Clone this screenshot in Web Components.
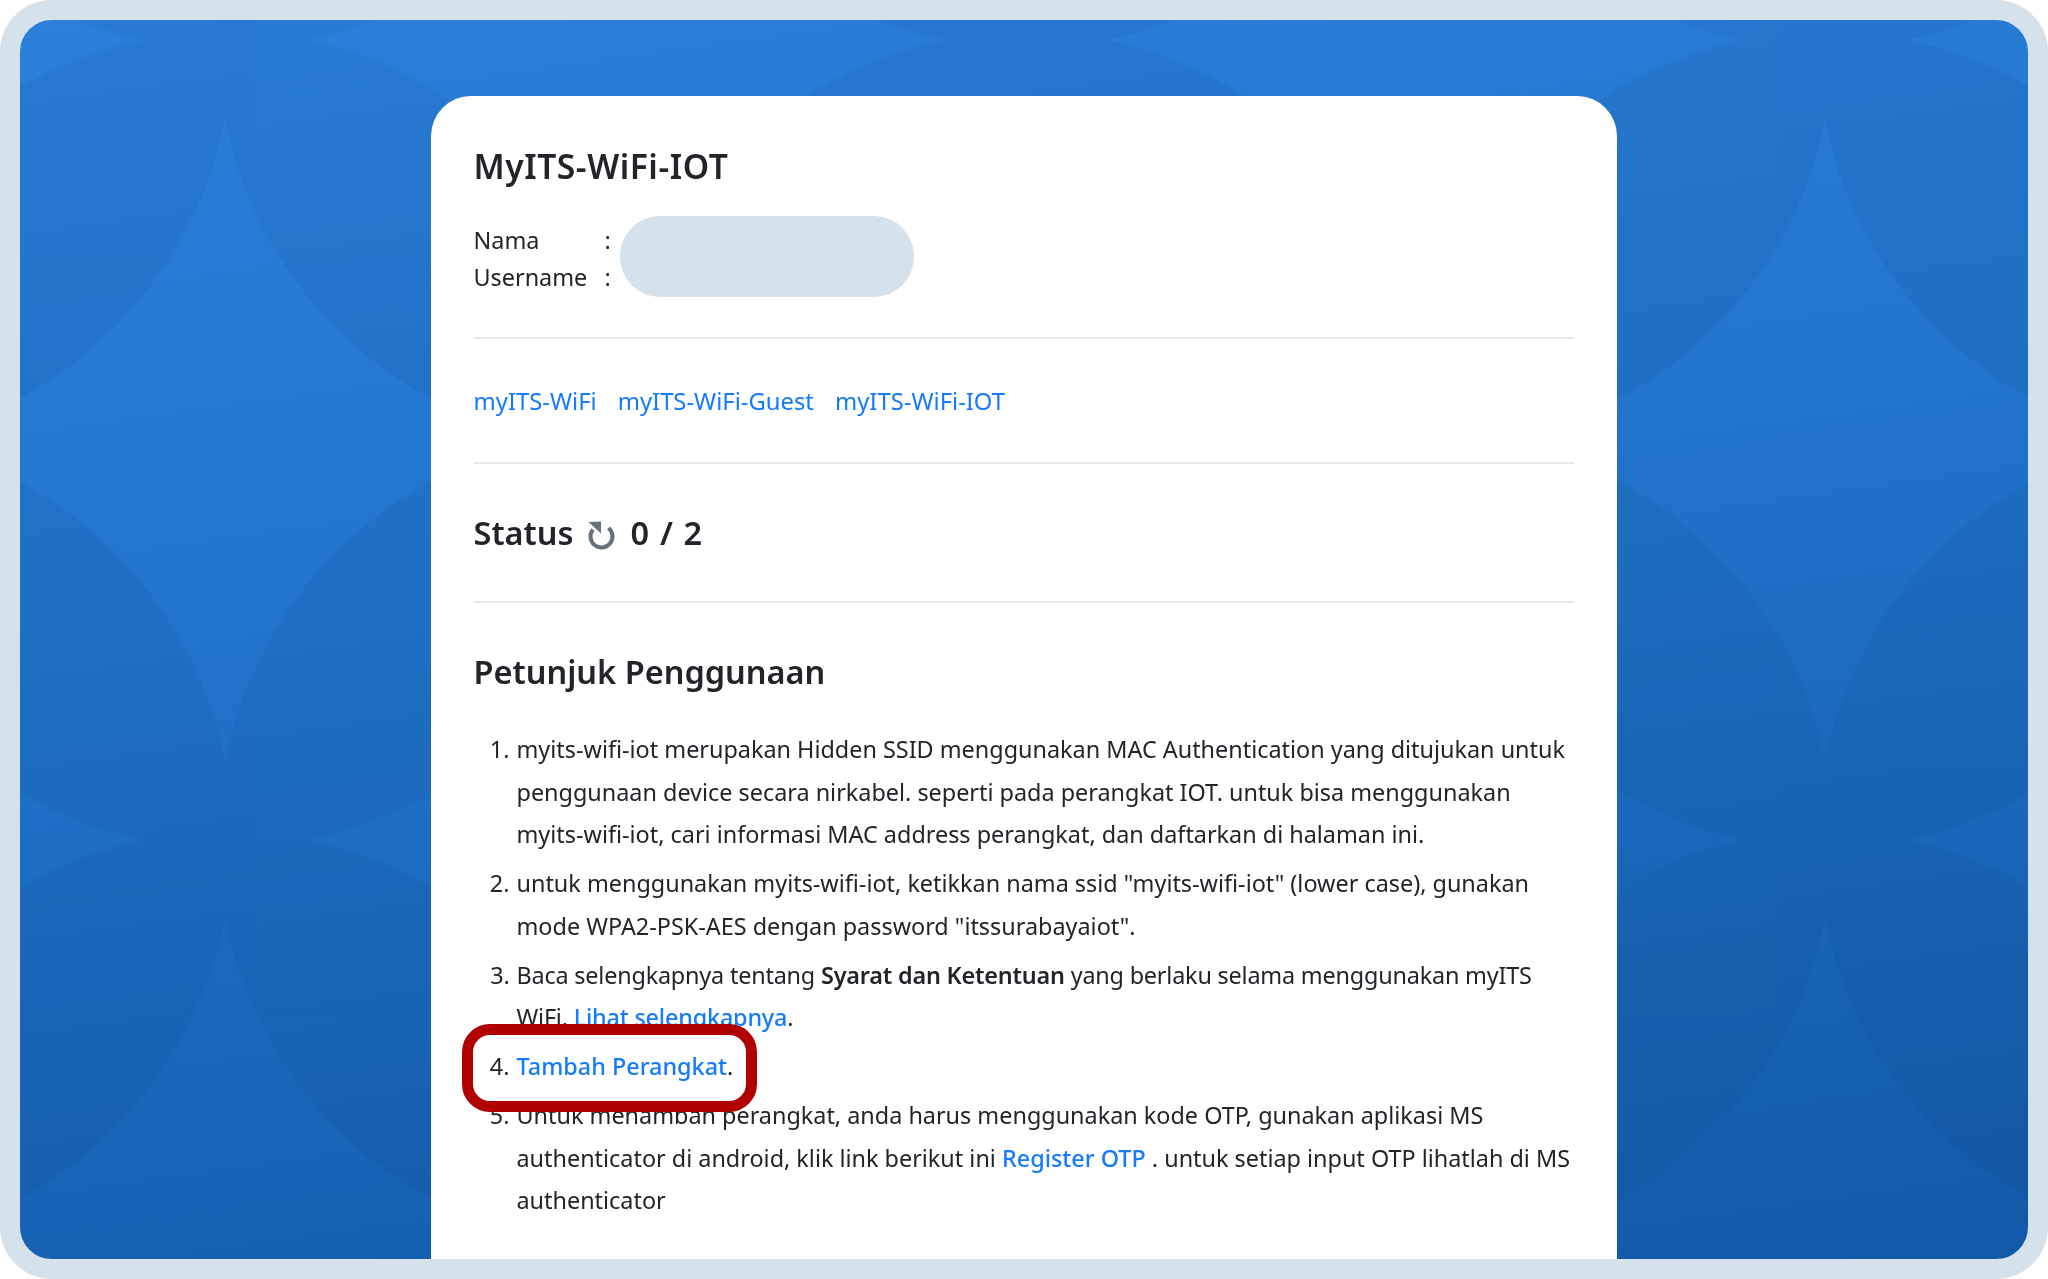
<!DOCTYPE html>
<html lang="id">
<head>
<meta charset="utf-8">
<title>MyITS-WiFi-IOT</title>
<style>
  html, body { margin: 0; background: #fff; }
  body { font-family: "Noto Sans", "Open Sans", sans-serif; color: #212529; }
</style>
</head>
<body>
<wifi-frame>
  <wifi-card>
    <card-title>MyITS-WiFi-IOT</card-title>
    <user-info></user-info>
    <card-rule></card-rule>
    <net-links>
      <a>myITS-WiFi</a><a>myITS-WiFi-Guest</a><a>myITS-WiFi-IOT</a>
    </net-links>
    <card-rule></card-rule>
    <status-line used="0" total="2"></status-line>
    <card-rule></card-rule>
    <guide-list heading="Petunjuk Penggunaan">
      <guide-item n="1.">myits-wifi-iot merupakan Hidden SSID menggunakan MAC Authentication yang ditujukan untuk penggunaan device secara nirkabel. seperti pada perangkat IOT. untuk bisa menggunakan myits-wifi-iot, cari informasi MAC address perangkat, dan daftarkan di halaman ini.</guide-item>
      <guide-item n="2.">untuk menggunakan myits-wifi-iot, ketikkan nama ssid "myits-wifi-iot" (lower case), gunakan mode WPA2-PSK-AES dengan password "itssurabayaiot".</guide-item>
      <guide-item n="3." style="letter-spacing:-.19px">Baca selengkapnya tentang <b>Syarat dan Ketentuan</b> yang berlaku selama menggunakan myITS WiFi. <a>Lihat selengkapnya</a>.</guide-item>
      <guide-item n="4."><a>Tambah Perangkat</a>.</guide-item>
      <guide-item n="5.">Untuk menambah perangkat, anda harus menggunakan kode OTP, gunakan aplikasi MS authenticator di android, klik link berikut ini <a>Register OTP</a> . untuk setiap input OTP lihatlah di MS authenticator</guide-item>
    </guide-list>
    <mark-box></mark-box>
  </wifi-card>
</wifi-frame>

<script>
// outer frame + blue patterned backdrop
class WifiFrame extends HTMLElement {
  constructor() {
    super();
    this.attachShadow({ mode: 'open' });
    // two lattices of circles, the overlap of both is the darker petal
    let a = '', b = '';
    for (let i = -1; i < 4; i++) {
      for (let j = -1; j < 3; j++) {
        a += `<circle cx="${205 + 800 * i}" cy="${420 + 800 * j}" r="408"/>`;
        b += `<circle cx="${605 + 800 * i}" cy="${20 + 800 * j}" r="408"/>`;
      }
    }
    this.shadowRoot.innerHTML = `
      <style>
        :host {
          display: block;
          box-sizing: border-box;
          width: 2048px;
          height: 1279px;
          border: 20px solid #d6e2eb;
          border-radius: 52px;
          overflow: hidden;
          position: relative;
          background: linear-gradient(172deg, #2a80da 0%, #2175cc 40%, #1259a8 100%);
        }
        svg { position: absolute; left: 0; top: 0; }
        .slot-wrap { position: relative; display: flex; height: 100%; }
      </style>
      <svg width="2008" height="1239" aria-hidden="true">
        <defs><clipPath id="lattice">${a}</clipPath></defs>
        <g clip-path="url(#lattice)"><g fill="#103a66" opacity=".08">${b}</g></g>
      </svg>
      <div class="slot-wrap"><slot></slot></div>
    `;
  }
}

class WifiCard extends HTMLElement {
  constructor() {
    super();
    this.attachShadow({ mode: 'open' });
    this.shadowRoot.innerHTML = `
      <style>
        :host {
          display: block;
          box-sizing: border-box;
          width: 1186px;
          margin: 76px 0 0 411px;
          padding: 46px 43px 0 42.5px;
          background: #fff;
          border-radius: 40px 40px 0 0;
          position: relative;
          overflow: hidden;
          filter: blur(.35px);
        }
      </style>
      <slot></slot>
    `;
  }
}

class CardTitle extends HTMLElement {
  constructor() {
    super();
    this.attachShadow({ mode: 'open' });
    this.shadowRoot.innerHTML = `
      <style>
        :host { display: block; font-size: 33.6px; line-height: 48px; font-weight: 600; letter-spacing: .55px; color: #212529; }
      </style>
      <slot></slot>
    `;
  }
}

class CardRule extends HTMLElement {
  constructor() {
    super();
    this.attachShadow({ mode: 'open' });
    this.shadowRoot.innerHTML = `
      <style>
        :host { display: block; height: 2px; background: #e6e7e9; }
      </style>
    `;
  }
}

class UserInfo extends HTMLElement {
  constructor() {
    super();
    this.attachShadow({ mode: 'open' });
    this.shadowRoot.innerHTML = `
      <style>
        :host {
          display: grid;
          grid-template-columns: 131px 1fr;
          grid-auto-rows: 37px;
          align-items: center;
          padding: 31px 0 42px;
          font-size: 23.4px;
          position: relative;
        }
        .blank {
          position: absolute;
          left: 146px;
          top: 26px;
          width: 294px;
          height: 81px;
          border-radius: 40px;
          background: #d6e2eb;
        }
      </style>
      <span>Nama</span><span>:</span>
      <span>Username</span><span>:</span>
      <div class="blank"></div>
    `;
  }
}

class NetLinks extends HTMLElement {
  constructor() {
    super();
    this.attachShadow({ mode: 'open' });
    this.shadowRoot.innerHTML = `
      <style>
        :host {
          display: flex;
          gap: 21px;
          padding: 42px 0 41px;
          font-size: 23.8px;
          line-height: 40px;
        }
        ::slotted(a) { color: #157afb; }
      </style>
      <slot></slot>
    `;
  }
}

class StatusLine extends HTMLElement {
  constructor() {
    super();
    this.attachShadow({ mode: 'open' });
  }
  connectedCallback() {
    this.shadowRoot.innerHTML = `
      <style>
        :host {
          display: flex;
          align-items: center;
          gap: 14px;
          padding: 48px 0 47px;
          font-size: 32.5px;
          line-height: 42px;
          font-weight: 600;
          word-spacing: 2.3px;
        }
        svg { margin-top: 3px; margin-left: -1px; flex: none; }
      </style>
      <span>Status</span>
      <svg width="30" height="30" viewBox="12 12 30 30" fill="none" stroke="#66717c" stroke-width="4">
        <path d="M33.5 20A11 11 0 1 1 18 21.5"/>
        <path d="M13.5 14 L26 13.5 L26 25.5Z" fill="#66717c" stroke="none"/>
      </svg>
      <span>${this.getAttribute('used')} / ${this.getAttribute('total')}</span>
    `;
  }
}

class GuideList extends HTMLElement {
  constructor() {
    super();
    this.attachShadow({ mode: 'open' });
  }
  connectedCallback() {
    this.shadowRoot.innerHTML = `
      <style>
        :host { display: block; padding-top: 45px; }
        h2 { margin: 0 0 32px; font-size: 32.5px; line-height: 48px; font-weight: 600; }
        .items { display: flex; flex-direction: column; gap: 6.3px; }
      </style>
      <h2>${this.getAttribute('heading')}</h2>
      <div class="items"><slot></slot></div>
    `;
  }
}

class GuideItem extends HTMLElement {
  constructor() {
    super();
    this.attachShadow({ mode: 'open' });
  }
  connectedCallback() {
    this.shadowRoot.innerHTML = `
      <style>
        :host {
          display: grid;
          grid-template-columns: 36px 1fr;
          column-gap: 7px;
          font-size: 23.4px;
          line-height: 42.6px;
        }
        .n { text-align: right; }
        ::slotted(a) { color: #157afb; font-weight: 500; }
        ::slotted(b) { font-weight: 600; }
      </style>
      <span class="n">${this.getAttribute('n')}</span>
      <div><slot></slot></div>
    `;
  }
}

// red annotation drawn over the list
class MarkBox extends HTMLElement {
  constructor() {
    super();
    this.attachShadow({ mode: 'open' });
    this.shadowRoot.innerHTML = `
      <style>
        :host {
          display: block;
          box-sizing: border-box;
          position: absolute;
          left: 31px;
          top: 928px;
          width: 295px;
          height: 88px;
          border: 11px solid #b00000;
          border-radius: 28px;
        }
      </style>
    `;
  }
}

customElements.define('wifi-frame', WifiFrame);
customElements.define('wifi-card', WifiCard);
customElements.define('card-title', CardTitle);
customElements.define('card-rule', CardRule);
customElements.define('user-info', UserInfo);
customElements.define('net-links', NetLinks);
customElements.define('status-line', StatusLine);
customElements.define('guide-list', GuideList);
customElements.define('guide-item', GuideItem);
customElements.define('mark-box', MarkBox);
</script>
</body>
</html>
